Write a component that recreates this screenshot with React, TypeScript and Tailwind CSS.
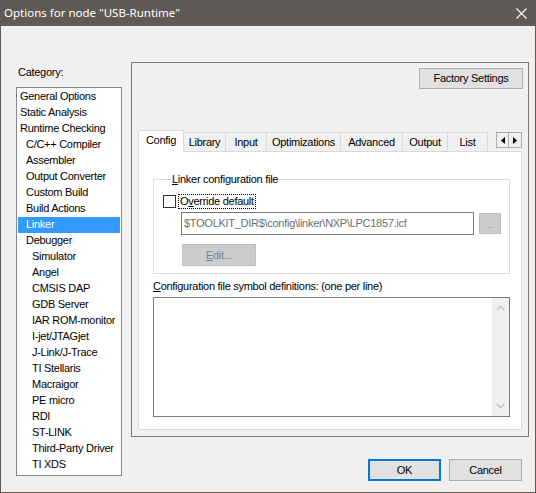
import React from "react";

const categories: { label: string; level: number; selected?: boolean }[] = [
  { label: "General Options", level: 0 },
  { label: "Static Analysis", level: 0 },
  { label: "Runtime Checking", level: 0 },
  { label: "C/C++ Compiler", level: 1 },
  { label: "Assembler", level: 1 },
  { label: "Output Converter", level: 1 },
  { label: "Custom Build", level: 1 },
  { label: "Build Actions", level: 1 },
  { label: "Linker", level: 1, selected: true },
  { label: "Debugger", level: 1 },
  { label: "Simulator", level: 2 },
  { label: "Angel", level: 2 },
  { label: "CMSIS DAP", level: 2 },
  { label: "GDB Server", level: 2 },
  { label: "IAR ROM-monitor", level: 2 },
  { label: "I-jet/JTAGjet", level: 2 },
  { label: "J-Link/J-Trace", level: 2 },
  { label: "TI Stellaris", level: 2 },
  { label: "Macraigor", level: 2 },
  { label: "PE micro", level: 2 },
  { label: "RDI", level: 2 },
  { label: "ST-LINK", level: 2 },
  { label: "Third-Party Driver", level: 2 },
  { label: "TI XDS", level: 2 },
];

const tabs: { label: string; w: string; active?: boolean }[] = [
  { label: "Config", w: "w-[46px]", active: true },
  { label: "Library", w: "w-[42px]" },
  { label: "Input", w: "w-[41px]" },
  { label: "Optimizations", w: "w-[74px]" },
  { label: "Advanced", w: "w-[62px]" },
  { label: "Output", w: "w-[45px]" },
  { label: "List", w: "w-[40px]" },
];

const indent = ["pl-[2px]", "pl-[8px]", "pl-[14px]"];

export default function App() {
  return (
    <div
      className="w-[536px] h-[493px] flex flex-col bg-[#f0f0f0] border border-t-0 border-[#5f5a55] text-[11px] tracking-[-0.28px] text-black overflow-hidden"
      style={{ fontFamily: "'Liberation Sans', Arial, sans-serif" }}
    >
      {/* Title bar */}
      <div className="h-[26px] shrink-0 bg-[#5f5a55] flex items-center justify-between pl-[4px] pr-[9px] -mx-px">
        <span
          className="text-white text-[11.5px] tracking-normal leading-[16px]"
          style={{ fontFamily: "'Noto Sans', 'Open Sans', sans-serif" }}
        >
          Options for node "USB-Runtime"
        </span>
        <svg width="11" height="11" viewBox="0 0 11 11" className="mt-px">
          <path d="M0.5 0.5 L10.5 10.5 M10.5 0.5 L0.5 10.5" stroke="#ffffff" strokeWidth="1.1" />
        </svg>
      </div>

      {/* Body */}
      <div className="flex flex-1 items-start">
        {/* Left column */}
        <div className="w-[106px] ml-[15px] pt-[38px] flex flex-col shrink-0">
          <div className="h-[16px] leading-[16px] pl-[2px]">Category:</div>
          <div className="mt-[7px] h-[389px] border border-[#828790] bg-white p-px flex flex-col">
            {categories.map((c) => (
              <div
                key={c.label}
                className={`h-[16px] leading-[15px] whitespace-nowrap ${indent[c.level]} ${
                  c.selected ? "bg-[#3399ff] text-white" : ""
                }`}
              >
                {c.label}
              </div>
            ))}
          </div>
        </div>

        {/* Right column */}
        <div className="ml-[9px] pt-[36px] flex flex-col">
          <div className="w-[398px] h-[375px] border border-[#7a7a7a] flex flex-col pl-[6px] pr-[5px] pt-[5px]">
            <div className="self-end w-[104px] h-[21px] border border-[#adadad] bg-[#e1e1e1] flex items-center justify-center">
              Factory Settings
            </div>

            {/* Tab control */}
            <div className="mt-[41px] w-[384px] flex flex-col">
              <div className="h-[22px] flex items-end">
                {tabs.map((t, i) =>
                  t.active ? (
                    <div
                      key={t.label}
                      className={`${t.w} h-[22px] relative z-10 bg-white border-l border-t border-r border-[#d9d9d9] flex justify-center pt-[1px] leading-[16px]`}
                    >
                      {t.label}
                    </div>
                  ) : (
                    <div
                      key={t.label}
                      className={`${t.w} h-[20px] bg-[#f0f0f0] border-t border-r border-[#d9d9d9] ${
                        i === 0 ? "border-l" : ""
                      } flex justify-center pt-[1px] leading-[16px] whitespace-nowrap`}
                    >
                      {t.label}
                    </div>
                  )
                )}
                <div className="ml-auto self-start mt-[2px] flex">
                  <div className="w-[13px] h-[16px] border border-[#adadad] bg-[#f0f0f0] flex items-center justify-center">
                    <svg width="4" height="7" viewBox="0 0 4 7">
                      <path d="M4 0 L0 3.5 L4 7 Z" fill="#000" />
                    </svg>
                  </div>
                  <div className="w-[13px] h-[16px] border border-l-0 border-[#adadad] bg-[#f0f0f0] flex items-center justify-center">
                    <svg width="4" height="7" viewBox="0 0 4 7">
                      <path d="M0 0 L4 3.5 L0 7 Z" fill="#000" />
                    </svg>
                  </div>
                </div>
              </div>

              {/* Tab page */}
              <div className="-mt-px relative h-[279px] bg-white border border-[#d9d9d9] pl-[14px] pt-[19px] flex flex-col">
                <fieldset className="w-[357px] border border-[#dcdcdc] pl-[9px] pb-[7px]">
                  <legend className="ml-[8px] px-px leading-[16px]">
                    <u>L</u>inker configuration file
                  </legend>
                  <div className="mt-[7px] h-[15px] flex items-center">
                    <div className="w-[13px] h-[13px] border border-[#333333] bg-white" />
                    <div className="ml-[2px] h-[15px] border border-dotted border-black px-px leading-[13px]">
                      O<u>v</u>erride default
                    </div>
                  </div>
                  <div className="mt-[3px] ml-[18px] flex items-center">
                    <div className="w-[293px] h-[23px] border border-[#7a7a7a] bg-white text-[#6d6d6d] flex items-center pl-[2px] whitespace-nowrap">
                      $TOOLKIT_DIR$\config\linker\NXP\LPC1857.icf
                    </div>
                    <div className="ml-[5px] w-[22px] h-[21px] border border-[#bfbfbf] bg-[#cccccc] text-[#a0a0a0] flex items-end justify-center pb-[3px] text-[9px] leading-[9px]">
                      ...
                    </div>
                  </div>
                  <div className="mt-[9px] ml-[19px] w-[74px] h-[22px] border border-[#bfbfbf] bg-[#cccccc] text-[#838383] flex items-center justify-center">
                    <span>
                      <u>E</u>dit...
                    </span>
                  </div>
                </fieldset>
                <div className="mt-[4px] h-[16px] leading-[16px] whitespace-nowrap">
                  <u>C</u>onfiguration file symbol definitions: (one per line)
                </div>
                <div className="mt-[3px] w-[357px] h-[120px] border border-[#7a7a7a] bg-white flex justify-end">
                  <div className="w-[17px] h-full bg-[#f0f0f0] flex flex-col justify-between items-center py-[7px]">
                    <svg width="9" height="6" viewBox="0 0 9 6">
                      <path d="M0.8 5 L4.5 1.3 L8.2 5" stroke="#c2c2c2" strokeWidth="1.5" fill="none" />
                    </svg>
                    <svg width="9" height="6" viewBox="0 0 9 6">
                      <path d="M0.8 1 L4.5 4.7 L8.2 1" stroke="#c2c2c2" strokeWidth="1.5" fill="none" />
                    </svg>
                  </div>
                </div>
              </div>
            </div>
          </div>

          {/* Bottom buttons */}
          <div className="mt-[22px] flex justify-end gap-[8px] pr-[7px]">
            <div className="w-[73px] h-[22px] border-2 border-[#0078d7] bg-[#e1e1e1] flex items-center justify-center">
              OK
            </div>
            <div className="w-[73px] h-[22px] border border-[#adadad] bg-[#e1e1e1] flex items-center justify-center">
              Cancel
            </div>
          </div>
        </div>
      </div>
    </div>
  );
}
